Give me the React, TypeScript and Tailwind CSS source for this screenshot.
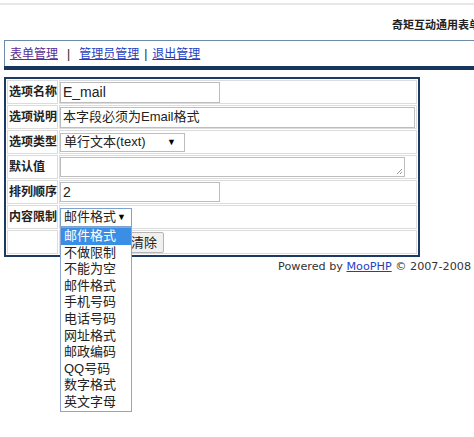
import React from "react";

const LIMITS = [
  "不做限制",
  "不能为空",
  "邮件格式",
  "手机号码",
  "电话号码",
  "网址格式",
  "邮政编码",
  "QQ号码",
  "数字格式",
  "英文字母",
];

function Row({ label, children }: { label: string; children?: React.ReactNode }) {
  return (
    <div className="flex h-[24px] gap-[1px]">
      <div className="w-[51px] border border-[#dcdcdc] flex items-center pl-[1px] text-[12px] font-bold text-[#222] whitespace-nowrap">
        {label}
      </div>
      <div className="flex-1 border border-[#dcdcdc] flex items-center">{children}</div>
    </div>
  );
}

function Caret() {
  return <span className="text-[9px] leading-none text-black">▼</span>;
}

export default function App() {
  return (
    <div
      className="relative w-[474px] h-[437px] overflow-hidden bg-white text-[#222]"
      style={{ fontFamily: '"Liberation Sans", "Noto Sans CJK SC", sans-serif' }}
    >
      <div className="mt-[3px] h-[2px] bg-[#e8e8e8]" />

      {/* title */}
      <div className="pt-[11px] pb-[6px] pl-[392px] h-[35px] whitespace-nowrap text-[11px] font-bold leading-[18px]">
        奇矩互动通用表单
      </div>

      {/* nav */}
      <div className="ml-[4px] border-t border-l border-[#6d8aa8] h-[26px] flex items-center pl-[5px] text-[12px] whitespace-nowrap">
        <a className="underline text-[#5a2d91]">表单管理</a>
        <span className="mx-[9px] text-[#222]">|</span>
        <a className="underline text-[#1f3fbf]">管理员管理 </a>
        <span className="mx-[5px] text-[#222]">|</span>
        <a className="underline text-[#1f3fbf]">退出管理</a>
      </div>
      <div className="ml-[4px] h-[4px] bg-[#17365d]" />
      <div className="h-[7px]" />

      {/* form table */}
      <div className="ml-[4px] w-[416px] border-2 border-[#1d3a63] p-[1px] flex flex-col gap-[1px]">
        <Row label="选项名称">
          <div className="w-[160px] h-[21px] border border-[#bdbdbd] flex items-center pl-[2px] text-[14px]">E_mail</div>
        </Row>
        <Row label="选项说明">
          <div className="w-[355px] h-[21px] border border-[#bdbdbd] flex items-center pl-[2px] text-[13px]">
            本字段必须为Email格式
          </div>
        </Row>
        <Row label="选项类型">
          <div className="w-[125px] h-[19px] border border-[#bdbdbd] flex items-center justify-between pl-[3px] pr-[8px] text-[13px]">
            <span>单行文本(text)</span>
            <Caret />
          </div>
        </Row>
        <Row label="默认值">
          <div className="relative w-[345px] h-[20px] border border-[#bdbdbd]">
            <svg className="absolute right-[1px] bottom-[1px]" width="7" height="7" viewBox="0 0 7 7">
              <path d="M6 1 L1 6 M6 4 L4 6" stroke="#999" strokeWidth="1" />
            </svg>
          </div>
        </Row>
        <Row label="排列顺序">
          <div className="w-[160px] h-[20px] border border-[#bdbdbd] flex items-center pl-[2px] text-[14px]">2</div>
        </Row>
        <Row label="内容限制">
          <div className="w-[72px] h-[19px] border border-[#7da2ce] flex items-center justify-between pl-[3px] pr-[5px] text-[13px]">
            <span>邮件格式</span>
            <Caret />
          </div>
        </Row>
        <Row label="">
          <div className="flex items-center gap-[22px] pl-[2px]">
            <button className="h-[21px] px-[6px] border border-[#b5b5b5] bg-[#f0f0f0] rounded-[2px] text-[13px]">提交</button>
            <button className="h-[21px] px-[6px] border border-[#b5b5b5] bg-[#f0f0f0] rounded-[2px] text-[13px]">清除</button>
          </div>
        </Row>
      </div>

      {/* footer */}
      <div
        className="mt-[2px] pr-[3px] text-right text-[11.2px] leading-[16px] text-[#333] whitespace-nowrap"
        style={{ fontFamily: '"DejaVu Sans", sans-serif' }}
      >
        Powered by <a className="underline text-[#1f3fbf]">MooPHP</a> © 2007-2008
      </div>

      {/* open dropdown list */}
      <div className="absolute left-[60px] top-[227px] w-[72px] border border-[#8ea6cf] bg-white text-[13px]">
        <div className="h-[16.6px] leading-[16.6px] pl-[3px] bg-[#3a8ee6] text-white">邮件格式</div>
        {LIMITS.map((t) => (
          <div key={t} className="h-[16.6px] leading-[16.6px] pl-[3px] text-[#222]">
            {t}
          </div>
        ))}
      </div>
    </div>
  );
}
